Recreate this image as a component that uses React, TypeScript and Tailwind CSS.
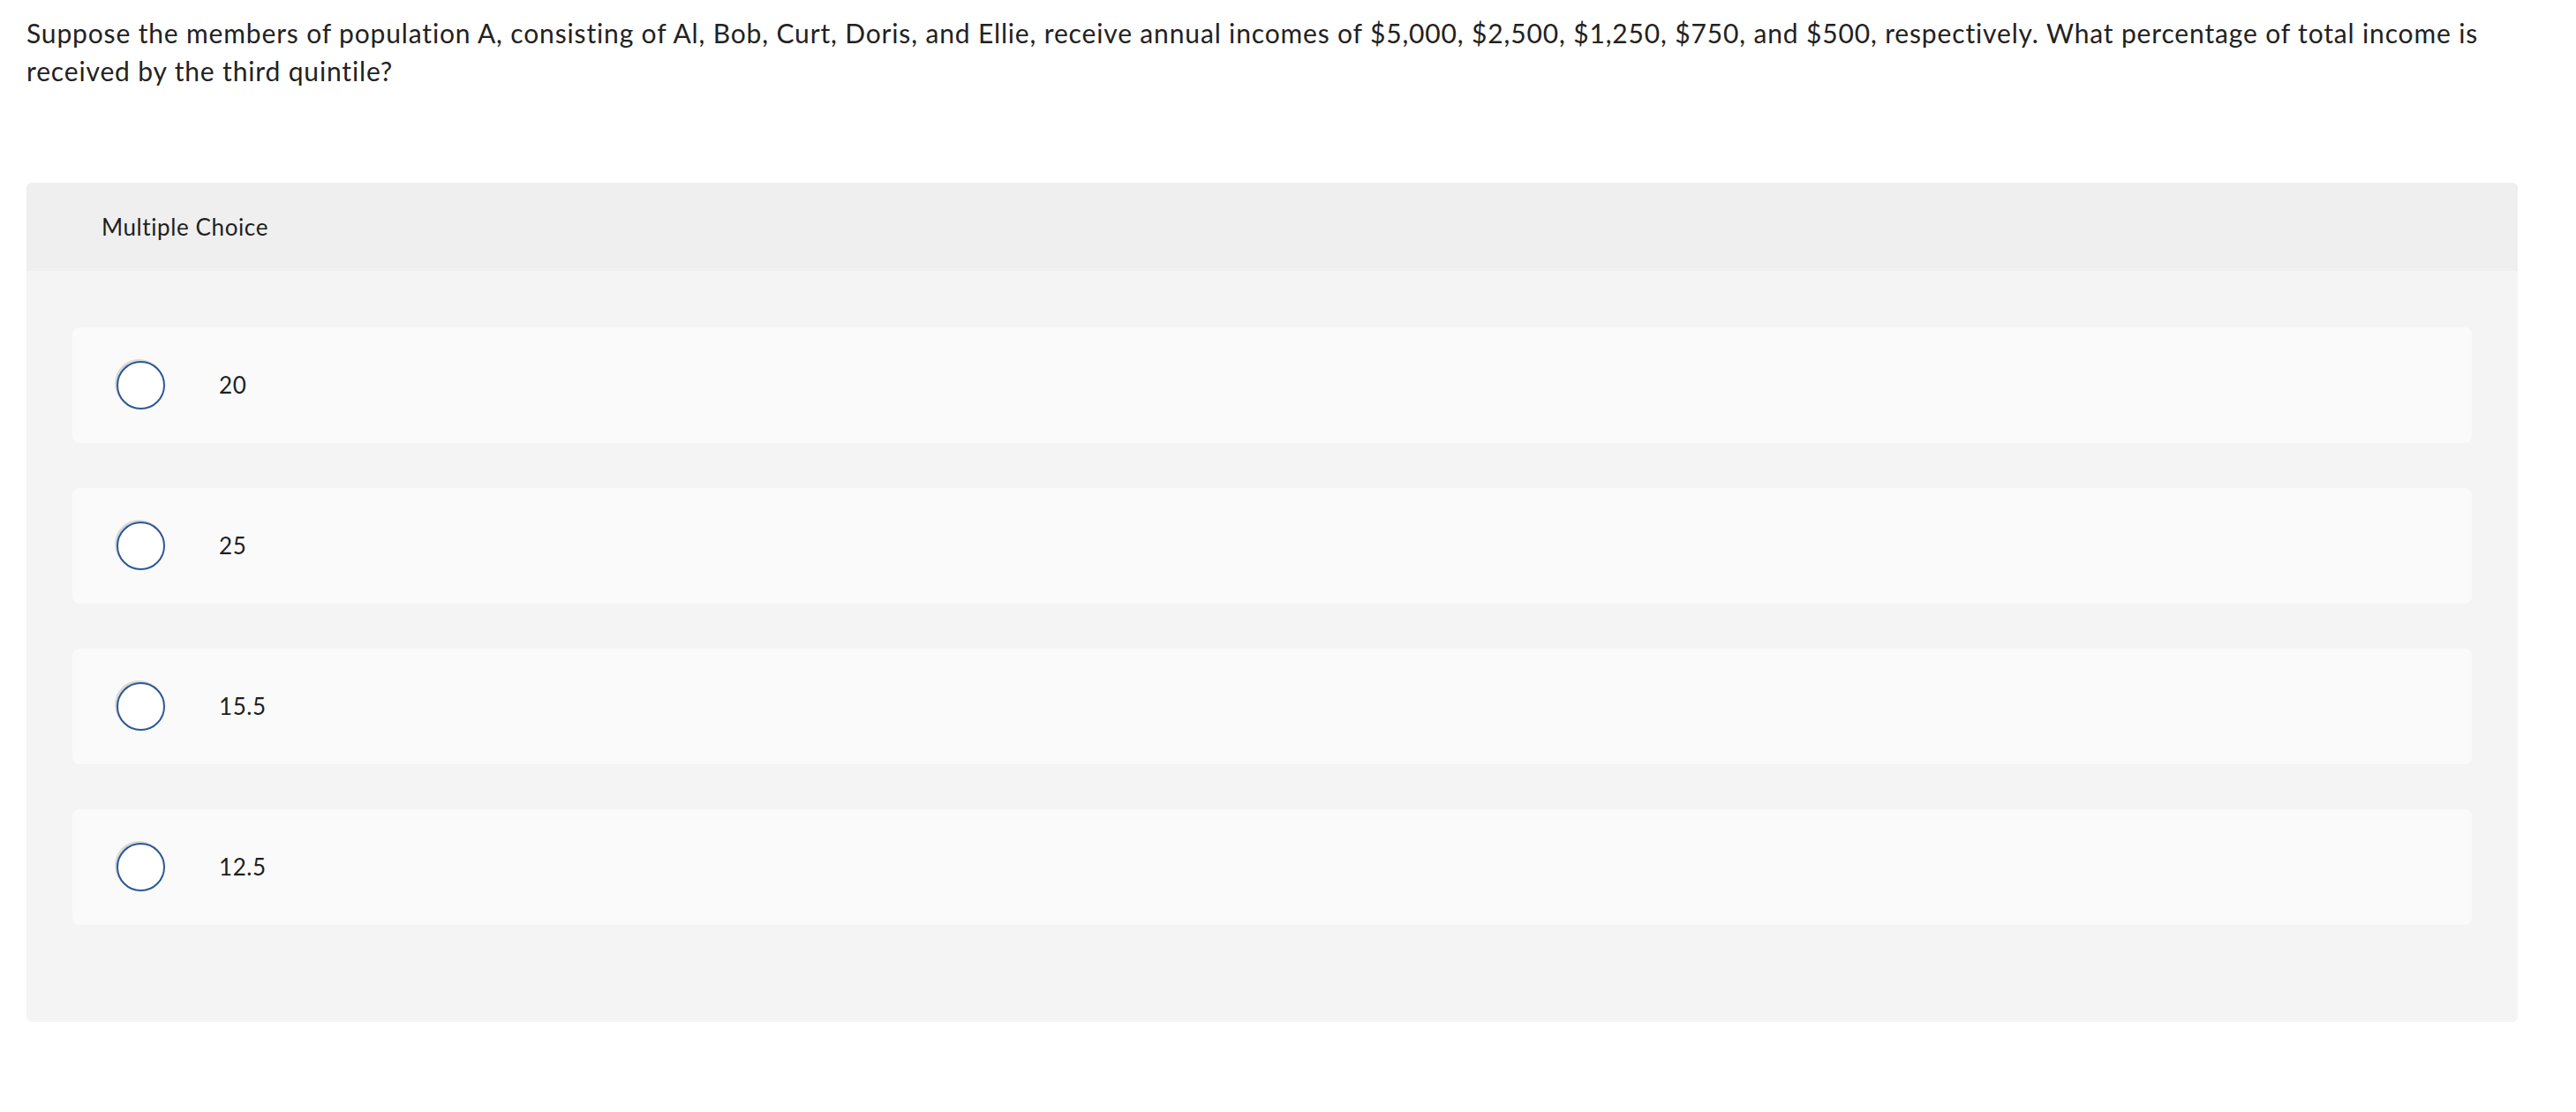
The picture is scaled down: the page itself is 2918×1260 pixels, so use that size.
const choices = ['20', '25', '15.5', '12.5'];

function RadioRow({ label }: { label: string }) {
    return (
        <div className="flex h-[131px] items-center rounded-lg bg-[#fafafa] pl-[50px]">
            <span className="h-[55px] w-[55px] shrink-0 rounded-full border-2 border-[#2b5896] bg-white shadow-[-2px_-2px_0_0_#d9d9d9]" />
            <span className="ml-[61px] text-[26px] tracking-[0.6px] text-[#1f1f1f]">{label}</span>
        </div>
    );
}

export default function App() {
    return (
        <div className="min-h-screen bg-white px-[30px] pt-[16px] font-['Lato',_'Open_Sans',_sans-serif] text-[#222]">
            <p className="w-[2822px] text-[30px] leading-[43px] tracking-[0.85px]">
                Suppose the members of population A, consisting of Al, Bob, Curt, Doris, and Ellie, receive annual incomes of $5,000, $2,500, $1,250, $750, and $500, respectively. What percentage of total income is received by the third quintile?
            </p>

            <div className="mt-[105px] w-[2822px] overflow-hidden rounded-md bg-[#f4f4f4]">
                <div className="flex h-[100px] items-center bg-[#efefef] pl-[85px]">
                    <span className="text-[26px] tracking-[0.6px] text-[#1f1f1f]">Multiple Choice</span>
                </div>
                <div className="flex flex-col gap-[51px] px-[52px] pb-[110px] pt-[64px]">
                    {choices.map((c) => (
                        <RadioRow key={c} label={c} />
                    ))}
                </div>
            </div>
        </div>
    );
}
